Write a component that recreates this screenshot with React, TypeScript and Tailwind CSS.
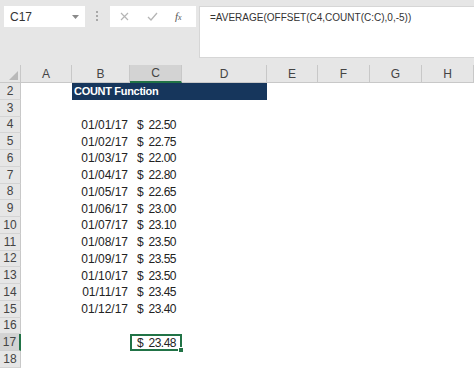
import React from "react";

const rows: { n: number; date?: string; value?: string }[] = [
  { n: 2 },
  { n: 3 },
  { n: 4, date: "01/01/17", value: "22.50" },
  { n: 5, date: "01/02/17", value: "22.75" },
  { n: 6, date: "01/03/17", value: "22.00" },
  { n: 7, date: "01/04/17", value: "22.80" },
  { n: 8, date: "01/05/17", value: "22.65" },
  { n: 9, date: "01/06/17", value: "23.00" },
  { n: 10, date: "01/07/17", value: "23.10" },
  { n: 11, date: "01/08/17", value: "23.50" },
  { n: 12, date: "01/09/17", value: "23.55" },
  { n: 13, date: "01/10/17", value: "23.50" },
  { n: 14, date: "01/11/17", value: "23.45" },
  { n: 15, date: "01/12/17", value: "23.40" },
  { n: 16 },
  { n: 17 },
  { n: 18 },
];

const cols = ["A", "B", "C", "D", "E", "F", "G", "H"];

function FormulaBar() {
  return (
    <div className="flex h-[65px] items-start bg-[#e6e6e6] pt-[6px]">
      <div className="ml-[4px] flex h-[21px] w-[81px] items-center justify-between bg-white pl-[6px] pr-[6px] text-[12px] text-[#333]">
        <span>C17</span>
        <svg width="7" height="4" viewBox="0 0 7 4">
          <path d="M0 0h7L3.5 4z" fill="#8a8a8a" />
        </svg>
      </div>
      <div className="ml-[10px] mt-[5px] flex w-[3px] flex-col items-center gap-[2px]">
        <span className="h-[2px] w-[2px] bg-[#a8a8a8]" />
        <span className="h-[2px] w-[2px] bg-[#a8a8a8]" />
        <span className="h-[2px] w-[2px] bg-[#a8a8a8]" />
      </div>
      <div className="ml-[12px] flex h-[21px] w-[86px] items-center bg-white">
        <svg className="ml-[10px]" width="9" height="9" viewBox="0 0 9 9">
          <path d="M1 1l7 7M8 1L1 8" stroke="#b5b5b5" strokeWidth="1.2" />
        </svg>
        <svg className="ml-[18px]" width="11" height="9" viewBox="0 0 11 9">
          <path d="M1 5l3 3 6-7" stroke="#b5b5b5" strokeWidth="1.3" fill="none" />
        </svg>
        <span className="ml-[17px] font-['Liberation_Serif',serif] text-[11px] italic text-[#555]">
          f<span className="text-[8px]">x</span>
        </span>
      </div>
      <div className="ml-[3px] h-[52px] flex-1 border border-r-0 border-[#d6d6d6] bg-white pl-[10px] pt-[4px] text-[10px] leading-[14px] text-[#333]">
        =AVERAGE(OFFSET(C4,COUNT(C:C),0,-5))
      </div>
    </div>
  );
}

function ColumnHeader() {
  return (
    <>
      <div className="flex items-end justify-end border-b border-r border-[#c8c8c8] bg-[#e6e6e6] pb-[2px] pr-[2px]">
        <svg width="9" height="9" viewBox="0 0 9 9">
          <path d="M9 0v9H0z" fill="#b9b9b9" />
        </svg>
      </div>
      {cols.map((c) =>
        c === "C" ? (
          <div
            key={c}
            className="flex items-center justify-center border-b-2 border-r border-b-[#217346] border-r-[#c8c8c8] bg-[#d3d3d3] text-[12px] text-[#444]"
          >
            {c}
          </div>
        ) : (
          <div
            key={c}
            className="flex items-center justify-center border-b border-r border-[#c8c8c8] bg-[#e6e6e6] text-[12px] text-[#444]"
          >
            {c}
          </div>
        )
      )}
    </>
  );
}

function RowHeader({ n }: { n: number }) {
  if (n === 17) {
    return (
      <div className="flex items-center justify-center border-b border-r-2 border-b-[#d0d0d0] border-r-[#217346] bg-[#d3d3d3] text-[12px] text-[#444]">
        {n}
      </div>
    );
  }
  return (
    <div className="flex items-center justify-center border-b border-r border-b-[#d4d4d4] border-r-[#c8c8c8] bg-[#e6e6e6] text-[12px] text-[#444]">
      {n}
    </div>
  );
}

export default function App() {
  return (
    <div className="h-[368px] w-[474px] overflow-hidden bg-white font-['Liberation_Sans',Arial,sans-serif]">
      <FormulaBar />
      <div className="grid grid-cols-[21px_51px_58px_52px_85px_51px_52px_52px_52px] grid-rows-[18px] auto-rows-[16.75px]">
        <ColumnHeader />
        {rows.map((r) => (
          <React.Fragment key={r.n}>
            <RowHeader n={r.n} />
            <div />
            {r.n === 2 ? (
              <div className="col-span-3 flex items-center bg-[#16365c] pl-[2px] text-[11px] font-bold tracking-[-0.3px] text-white">
                COUNT Function
              </div>
            ) : (
              <>
                <div className="flex items-center justify-end pr-[2px] text-[12px] text-[#222]">
                  {r.date}
                </div>
                {r.value ? (
                  <div className="flex items-center justify-between pl-[7px] pr-[6px] text-[12px] text-[#222]">
                    <span>$</span>
                    <span className="tracking-[-0.5px]">{r.value}</span>
                  </div>
                ) : r.n === 17 ? (
                  <div className="relative flex items-center justify-between border-2 border-[#217346] pl-[5px] pr-[4px] text-[12px] text-[#222]">
                    <span>$</span>
                    <span className="tracking-[-0.5px]">23.48</span>
                    <span className="absolute -bottom-[4px] -right-[4px] h-[6px] w-[6px] border border-white bg-[#217346]" />
                  </div>
                ) : (
                  <div />
                )}
                <div />
              </>
            )}
            <div />
            <div />
            <div />
            <div />
          </React.Fragment>
        ))}
      </div>
    </div>
  );
}
